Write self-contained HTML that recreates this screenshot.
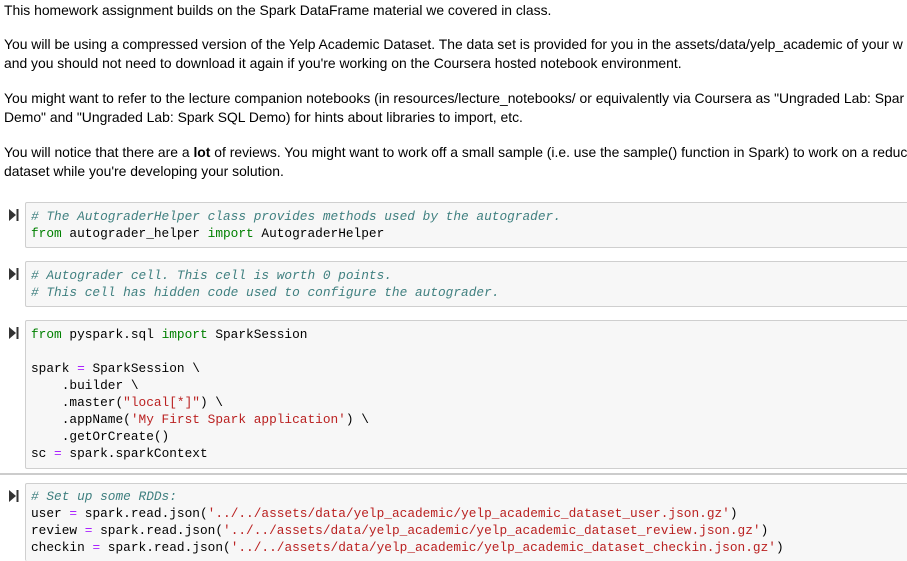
<!DOCTYPE html>
<html><head><style>
html,body{margin:0;width:907px;height:561px;overflow:hidden}
body{background:#fff;position:relative;font-family:"Liberation Sans",Arial,sans-serif;font-size:13.9px;color:#000}
.t{position:absolute;left:4px;white-space:nowrap;line-height:19px}
.cell{position:absolute;left:25px;width:900px;background:#f7f7f7;border:1px solid #cfcfcf;border-radius:2px;box-sizing:border-box}
pre{margin:0;position:absolute;left:5px;font-family:"Liberation Mono",monospace;font-size:12.8px;line-height:17px;color:#000}
.c{color:#408080;font-style:italic}.k{color:#008000}.s{color:#ba2121}.o{color:#aa22ff}
.run{position:absolute;left:9px;width:10px;height:12px}
</style></head><body>
<div class="t" style="top:1px">This homework assignment builds on the Spark DataFrame material we covered in class.</div>
<div class="t" style="top:35px">You will be using a compressed version of the Yelp Academic Dataset. The data set is provided for you in the assets/data/yelp_academic of your w</div>
<div class="t" style="top:54px">and you should not need to download it again if you're working on the Coursera hosted notebook environment.</div>
<div class="t" style="top:89px">You might want to refer to the lecture companion notebooks (in resources/lecture_notebooks/ or equivalently via Coursera as "Ungraded Lab: Spar</div>
<div class="t" style="top:108px">Demo" and "Ungraded Lab: Spark SQL Demo) for hints about libraries to import, etc.</div>
<div class="t" style="top:143px">You will notice that there are a <b>lot</b> of reviews. You might want to work off a small sample (i.e. use the sample() function in Spark) to work on a reduc</div>
<div class="t" style="top:162px">dataset while you're developing your solution.</div>

<svg class="run" style="top:209px" viewBox="0 0 10 12"><path d="M0 0L7 6L0 12Z" fill="#333"/><rect x="7.5" y="0" width="2" height="12" fill="#333"/></svg>
<div class="cell" style="top:202px;height:46px"><pre style="top:5px"><span class="c"># The AutograderHelper class provides methods used by the autograder.</span>
<span class="k">from</span> autograder_helper <span class="k">import</span> AutograderHelper</pre></div>

<svg class="run" style="top:268px" viewBox="0 0 10 12"><path d="M0 0L7 6L0 12Z" fill="#333"/><rect x="7.5" y="0" width="2" height="12" fill="#333"/></svg>
<div class="cell" style="top:261px;height:46px"><pre style="top:5px"><span class="c"># Autograder cell. This cell is worth 0 points.</span>
<span class="c"># This cell has hidden code used to configure the autograder.</span></pre></div>

<svg class="run" style="top:327px" viewBox="0 0 10 12"><path d="M0 0L7 6L0 12Z" fill="#333"/><rect x="7.5" y="0" width="2" height="12" fill="#333"/></svg>
<div class="cell" style="top:320px;height:149px"><pre style="top:5px"><span class="k">from</span> pyspark.sql <span class="k">import</span> SparkSession

spark <span class="o">=</span> SparkSession \
    .builder \
    .master(<span class="s">"local[*]"</span>) \
    .appName(<span class="s">'My First Spark application'</span>) \
    .getOrCreate()
sc <span class="o">=</span> spark.sparkContext</pre></div>

<div style="position:absolute;left:0;top:473px;width:907px;height:2px;background:#ccc"></div>

<svg class="run" style="top:490px" viewBox="0 0 10 12"><path d="M0 0L7 6L0 12Z" fill="#333"/><rect x="7.5" y="0" width="2" height="12" fill="#333"/></svg>
<div class="cell" style="top:483px;height:78px;border-bottom:none"><pre style="top:4px"><span class="c"># Set up some RDDs:</span>
user <span class="o">=</span> spark.read.json(<span class="s">'../../assets/data/yelp_academic/yelp_academic_dataset_user.json.gz'</span>)
review <span class="o">=</span> spark.read.json(<span class="s">'../../assets/data/yelp_academic/yelp_academic_dataset_review.json.gz'</span>)
checkin <span class="o">=</span> spark.read.json(<span class="s">'../../assets/data/yelp_academic/yelp_academic_dataset_checkin.json.gz'</span>)</pre></div>
</body></html>
